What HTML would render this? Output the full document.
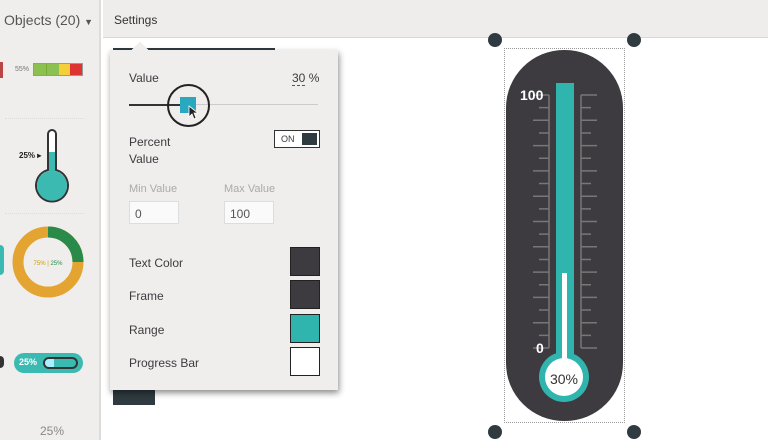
<!DOCTYPE html>
<html><head><meta charset="utf-8"><style>
*{margin:0;padding:0;box-sizing:border-box}
body{width:768px;height:440px;overflow:hidden;background:#fff;font-family:"Liberation Sans",sans-serif;position:relative;color:#3a3a3e}
.a{position:absolute}
.lbl{position:absolute;font-size:12px;color:#3c3c40}
.sw{position:absolute;left:290px;width:30px;height:29px;border:1.5px solid #222}
</style></head><body>
<div class="a" style="left:0;top:0;width:101px;height:440px;background:#efeeec;border-right:2px solid #dcdcda"></div>
<div class="a" style="left:103px;top:0;width:665px;height:38px;background:#eeedeb;border-bottom:1px solid #d8d8d6"></div>
<div class="a" style="left:4px;top:12px;font-size:14px;color:#555">Objects (20) <span style="font-size:9px">▼</span></div>
<div class="a" style="left:114px;top:13px;font-size:12px;color:#333">Settings</div>
<div class="a" style="left:0;top:62px;width:3px;height:16px;background:#b44"></div>
<div class="a" style="left:15px;top:66px;font-size:7px;color:#777">55%</div>
<div class="a" style="left:33px;top:63px;width:50px;height:13px;display:flex;border:1px solid #999">
<div style="flex:1;background:#8cc152;border-right:1px solid #7a3"></div><div style="flex:1;background:#8cc152"></div><div style="flex:1;background:#f5cf3a"></div><div style="flex:1;background:#d33"></div></div>
<div class="a" style="left:5px;top:118px;width:80px;border-top:1px dotted #ddd"></div>
<div class="a" style="left:19px;top:151px;font-size:8px;font-weight:bold;color:#222">25% ▸</div>
<svg class="a" style="left:30px;top:128px" width="44" height="76"><path d="M18 6 a4 4 0 0 1 8 0 v36 a16 16 0 1 1 -8 0z" fill="#fff" stroke="#333" stroke-width="2"/><path d="M19 24 h6 v19 a15 15 0 1 1 -6 0z" fill="#3bbab2"/></svg>
<div class="a" style="left:5px;top:213px;width:80px;border-top:1px dotted #ddd"></div>
<svg class="a" style="left:12px;top:226px" width="74" height="74"><circle cx="36" cy="36" r="30" fill="none" stroke="#e4a431" stroke-width="11"/><path d="M36 6 A30 30 0 0 1 66 36" fill="none" stroke="#2a8a4a" stroke-width="11"/><text x="36" y="39" font-size="6" text-anchor="middle" fill="#c90">75% | <tspan fill="#2a8a4a">25%</tspan></text></svg>
<div class="a" style="left:0;top:245px;width:4px;height:30px;border-radius:0 4px 4px 0;background:#3bbab2"></div>
<div class="a" style="left:5px;top:313px;width:80px;border-top:1px dotted #eee"></div>
<div class="a" style="left:0;top:356px;width:4px;height:12px;border-radius:0 4px 4px 0;background:#333"></div>
<div class="a" style="left:14px;top:353px;width:69px;height:20px;border-radius:10px;background:#3bbab2"></div>
<div class="a" style="left:19px;top:357px;font-size:9px;font-weight:bold;color:#fff">25%</div>
<div class="a" style="left:43px;top:357px;width:35px;height:12px;border-radius:6px;border:2px solid #333;background:#3bbab2"><div style="width:9px;height:8px;background:#aef;border-radius:4px 0 0 4px"></div></div>
<div class="a" style="left:5px;top:410px;width:80px;border-top:1px dotted #eee"></div>
<div class="a" style="left:40px;top:424px;font-size:12px;color:#888">25%</div>
<div class="a" style="left:504px;top:48px;width:121px;height:375px;border:1px dotted #999"></div>
<div class="a" style="left:506px;top:50px;width:117px;height:371px;border-radius:58px;background:#3d3b40"></div>
<svg class="a" style="left:504px;top:48px" width="121" height="375">
<g stroke="#777" stroke-width="1.5">
<line x1="45" y1="47" x2="45" y2="300"/><line x1="77" y1="47" x2="77" y2="300"/>
</g>
<path id="tk" d="" stroke="#777" stroke-width="1.5"/>
<rect x="52" y="35" width="18" height="280" fill="#2fb5ae"/>
<circle cx="60" cy="329" r="25" fill="#2fb5ae"/>
<circle cx="60" cy="329" r="19" fill="#fff"/>
<rect x="58" y="225" width="5" height="95" fill="#fff"/>
<text x="60" y="336" font-size="14" text-anchor="middle" fill="#333" font-family="Liberation Sans">30%</text>
<text x="16" y="52" font-size="14" fill="#fff" font-weight="bold" font-family="Liberation Sans">100</text>
<text x="32" y="305" font-size="14" fill="#fff" font-weight="bold" font-family="Liberation Sans">0</text>
</svg>
<script>
var p="";for(var i=0;i<=20;i++){var y=95-48+i*12.65;var l=i%2==0;p+="M45 "+y+"H"+(l?29:35)+"M77 "+y+"H"+(l?93:87);}
document.getElementById("tk").setAttribute("d",p);
</script>
<div class="a" style="left:488px;top:33px;width:14px;height:14px;border-radius:50%;background:#2f3b40"></div>
<div class="a" style="left:627px;top:33px;width:14px;height:14px;border-radius:50%;background:#2f3b40"></div>
<div class="a" style="left:488px;top:425px;width:14px;height:14px;border-radius:50%;background:#2f3b40"></div>
<div class="a" style="left:627px;top:425px;width:14px;height:14px;border-radius:50%;background:#2f3b40"></div>
<div class="a" style="left:113px;top:48px;width:162px;height:5px;background:#2f3b40"></div>
<div class="a" style="left:113px;top:385px;width:42px;height:20px;background:#2f3b40"></div>
<div class="a" style="left:110px;top:50px;width:228px;height:340px;background:#efeeec;box-shadow:1px 3px 6px rgba(0,0,0,.45)"></div>
<div class="a" style="left:134px;top:44px;width:12px;height:12px;background:#efeeec;transform:rotate(45deg)"></div>
<div class="lbl" style="left:129px;top:71px">Value</div>
<div class="lbl" style="left:292px;top:71px"><span style="border-bottom:1px dashed #555">30</span> %</div>
<div class="a" style="left:129px;top:104px;width:189px;height:1px;background:#ccc"></div>
<div class="a" style="left:129px;top:104px;width:56px;height:2px;background:#333"></div>
<div class="a" style="left:167px;top:84px;width:43px;height:43px;border-radius:50%;border:2px solid #222"></div>
<div class="a" style="left:180px;top:97px;width:16px;height:16px;background:#2aa8c0"></div>
<svg class="a" style="left:188px;top:105px" width="12" height="16"><path d="M1 1 L1 12 L4 9 L6 14 L8 13 L6 8 L10 8Z" fill="#222" stroke="#fff" stroke-width=".8"/></svg>
<div class="lbl" style="left:129px;top:134px;line-height:17px">Percent<br>Value</div>
<div class="a" style="left:274px;top:130px;width:46px;height:18px;border:1.5px solid #333;background:#fff;font-size:9px;padding:3px 0 0 6px">ON</div>
<div class="a" style="left:302px;top:133px;width:15px;height:12px;background:#2f3b40"></div>
<div class="lbl" style="left:129px;top:183px;font-size:11px;color:#aaa">Min Value</div>
<div class="lbl" style="left:224px;top:183px;font-size:11px;color:#aaa">Max Value</div>
<div class="a" style="left:129px;top:201px;width:50px;height:23px;border:1px solid #ddd;background:#fafafa;font-size:12px;padding:5px 5px;color:#555">0</div>
<div class="a" style="left:224px;top:201px;width:50px;height:23px;border:1px solid #ddd;background:#fafafa;font-size:12px;padding:5px 5px;color:#555">100</div>
<div class="lbl" style="left:129px;top:256px">Text Color</div>
<div class="sw" style="top:247px;background:#3d3b40"></div>
<div class="lbl" style="left:129px;top:289px">Frame</div>
<div class="sw" style="top:280px;background:#3d3b40"></div>
<div class="lbl" style="left:129px;top:323px">Range</div>
<div class="sw" style="top:314px;background:#2fb5ae"></div>
<div class="lbl" style="left:129px;top:356px">Progress Bar</div>
<div class="sw" style="top:347px;background:#fff"></div>
</body></html>
